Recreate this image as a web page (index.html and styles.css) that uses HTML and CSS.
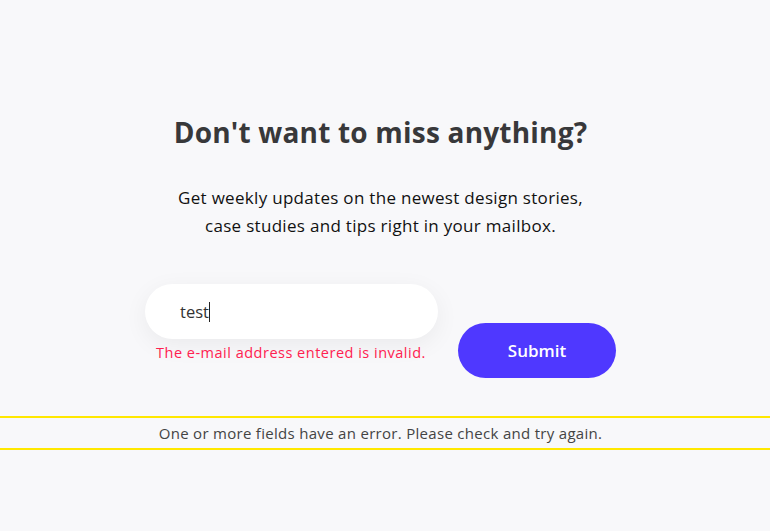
FILE: index.html
```html
<!DOCTYPE html>
<html lang="en">
<head>
<meta charset="utf-8">
<title>Newsletter</title>
<link rel="stylesheet" href="styles.css">
</head>
<body>
<main class="page">
  <section class="signup">
    <h1 class="title">Don't want to miss anything?</h1>
    <p class="lead">Get weekly updates on the newest design stories,<br>case studies and tips right in your mailbox.</p>
    <form class="form">
      <div class="field">
        <div class="input"><span class="value">test</span><span class="caret"></span></div>
        <div class="error">The e-mail address entered is invalid.</div>
      </div>
      <button type="button" class="submit">Submit</button>
    </form>
  </section>
  <div class="notice">One or more fields have an error. Please check and try again.</div>
</main>
</body>
</html>
```
FILE: styles.css
```css
html, body {
  margin: 0;
  padding: 0;
  background: #f8f8fa;
}
body {
  font-family: "Open Sans", "Noto Sans", sans-serif;
  color: #333;
}
.page {
  width: 770px;
  height: 531px;
  padding-top: 112px;
  box-sizing: border-box;
}
.signup {
  display: flex;
  flex-direction: column;
  align-items: center;
  padding-right: 9px;
}
.title {
  margin: 0;
  font-size: 28px;
  line-height: 40px;
  font-weight: 700;
  letter-spacing: 0.2px;
  color: #38383a;
}
.lead {
  margin: 32px 0 0;
  font-size: 17px;
  line-height: 28px;
  letter-spacing: 0.3px;
  text-align: center;
  color: #111;
}
.form {
  display: flex;
  gap: 20px;
  margin-top: 44px;
}
.field {
  display: flex;
  flex-direction: column;
}
.input {
  width: 293px;
  height: 55px;
  box-sizing: border-box;
  background: #fff;
  border-radius: 28px;
  box-shadow: 0 6px 24px rgba(0, 0, 0, 0.06);
  display: flex;
  align-items: center;
  padding-left: 35px;
  font-size: 16.5px;
  color: #333;
}
.caret {
  display: inline-block;
  width: 1px;
  height: 20px;
  background: #222;
}
.error {
  margin-top: 4px;
  padding-left: 11px;
  font-size: 14.5px;
  line-height: 20px;
  letter-spacing: 0.5px;
  color: #ff2150;
}
.submit {
  margin-top: 39px;
  width: 158px;
  height: 55px;
  border: none;
  border-radius: 28px;
  background: #4f38ff;
  color: #fff;
  font-family: inherit;
  font-size: 17px;
  font-weight: 600;
}
.notice {
  margin-top: 38px;
  border-top: 2px solid #ffe800;
  border-bottom: 2px solid #ffe800;
  padding-right: 9px;
  text-align: center;
  font-size: 15px;
  line-height: 30px;
  letter-spacing: 0.3px;
  color: #444;
}
```
